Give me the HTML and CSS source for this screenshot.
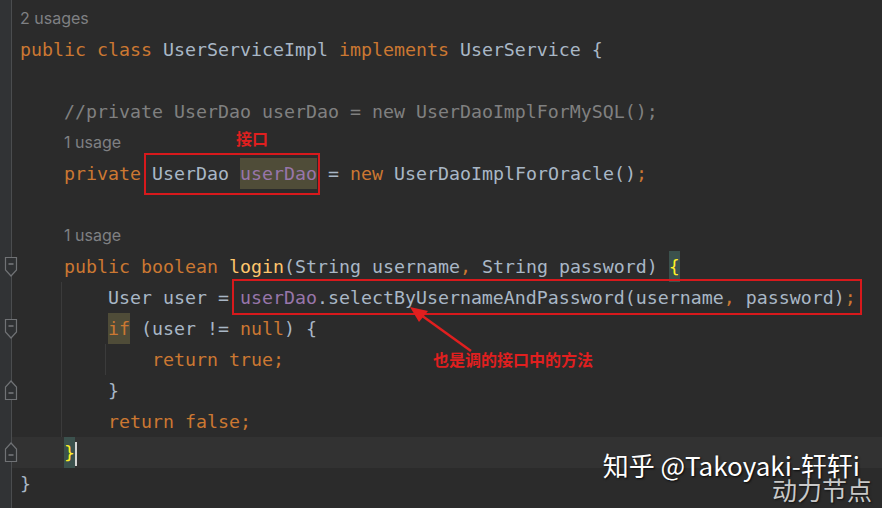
FILE: index.html
```html
<!DOCTYPE html>
<html lang="en">
<head>
    <meta charset="UTF-8">
    <title>UserServiceImpl.java</title>
    <link rel="stylesheet" href="styles.css">
</head>
<body>
    <div class="editor">
        <div class="gutter">
            <svg class="fold fold-8" width="14" height="22" viewBox="0 0 14 22"><path d="M1.5 1.5 H12.5 V14 L7 20 L1.5 14 Z" /><line x1="4.5" y1="8" x2="9.5" y2="8" /></svg>
            <svg class="fold fold-10" width="14" height="22" viewBox="0 0 14 22"><path d="M1.5 1.5 H12.5 V14 L7 20 L1.5 14 Z" /><line x1="4.5" y1="8" x2="9.5" y2="8" /></svg>
            <svg class="fold fold-12" width="14" height="22" viewBox="0 0 14 22"><path d="M1.5 20.5 H12.5 V8 L7 2 L1.5 8 Z" /><line x1="4.5" y1="14" x2="9.5" y2="14" /></svg>
            <svg class="fold fold-14" width="14" height="22" viewBox="0 0 14 22"><path d="M1.5 20.5 H12.5 V8 L7 2 L1.5 8 Z" /><line x1="4.5" y1="14" x2="9.5" y2="14" /></svg>
        </div>

        <div class="code">
            <div class="guide guide-method"></div>
            <div class="guide guide-if"></div>

            <div class="row hint">2 usages</div>
            <div class="row"><span class="kw">public class</span> UserServiceImpl <span class="kw">implements</span> UserService {</div>
            <div class="row"> </div>
            <div class="row">    <span class="comment">//private UserDao userDao = new UserDaoImplForMySQL();</span></div>
            <div class="row hint indent1">1 usage</div>
            <div class="row">    <span class="kw">private</span> UserDao <span class="field mark">userDao</span> = <span class="kw">new</span> UserDaoImplForOracle()<span class="kw">;</span></div>
            <div class="row"> </div>
            <div class="row hint indent1">1 usage</div>
            <div class="row">    <span class="kw">public boolean</span> <span class="method">login</span>(String username<span class="kw">,</span> String password) <span class="brace-match">{</span></div>
            <div class="row">        User user = <span class="field">userDao</span>.selectByUsernameAndPassword(username<span class="kw">,</span> password)<span class="kw">;</span></div>
            <div class="row">        <span class="kw mark">if</span> (user != <span class="kw">null</span>) {</div>
            <div class="row">            <span class="kw">return true;</span></div>
            <div class="row">        }</div>
            <div class="row">        <span class="kw">return false;</span></div>
            <div class="row current">    <span class="brace-match">}</span><span class="caret"></span></div>
            <div class="row">}</div>
        </div>

        <div class="box box-field"></div>
        <div class="note note-field">接口</div>
        <div class="box box-call"></div>
        <svg class="arrow" width="882" height="508" viewBox="0 0 882 508">
            <line x1="471" y1="351" x2="421" y2="315" />
            <polygon points="410,307 428,311 419,322" />
        </svg>
        <div class="note note-call">也是调的接口中的方法</div>

        <div class="watermark">
            <div class="wm-main">知乎 @Takoyaki-轩轩i</div>
            <div class="wm-sub">动力节点</div>
        </div>
    </div>
</body>
</html>
```

FILE: styles.css
```css
body {
    margin: 0;
    padding: 0;
    background-color: #2b2b2b;
    overflow: hidden;
}

.editor {
    position: relative;
    display: flex;
    width: 882px;
    height: 508px;
    background-color: #2b2b2b;
    overflow: hidden;
}

.gutter {
    position: relative;
    z-index: 2;
    width: 11px;
    flex: none;
    background-color: #313335;
    border-right: 1px solid #4b4d4f;
}

.fold {
    position: absolute;
    left: 4px;
}

.fold path {
    fill: #2f3133;
    stroke: #707275;
    stroke-width: 1.2;
}

.fold line {
    stroke: #8a8c8f;
    stroke-width: 1.2;
}

.fold-8 { top: 256px; }
.fold-10 { top: 318px; }
.fold-12 { top: 379px; }
.fold-14 { top: 441px; }

.code {
    position: relative;
    flex: 1;
    padding-top: 3px;
    font-family: "DejaVu Sans Mono", "Liberation Mono", monospace;
    font-size: 18.27px;
    color: #a9b7c6;
}

.row {
    height: 31px;
    line-height: 31px;
    padding-left: 8px;
    white-space: pre;
}

.row.current {
    background-color: #323232;
}

.hint {
    font-family: Inter, "Noto Sans", sans-serif;
    font-size: 16px;
    color: #7f8083;
}

.hint.indent1 {
    padding-left: 52px;
}

.kw { color: #cc7832; }
.comment { color: #808080; }
.field { color: #9876aa; }
.method { color: #ffc66d; }

.mark {
    display: inline-block;
    background-color: #4f4c38;
}

.brace-match {
    display: inline-block;
    color: #ffef28;
    background-color: #3b514d;
}

.caret {
    display: inline-block;
    width: 2px;
    height: 24px;
    vertical-align: middle;
    background-color: #d4d4d4;
}

.guide {
    position: absolute;
    width: 1px;
    background-color: #3b3b3b;
}

.guide-method {
    left: 49px;
    top: 282px;
    height: 155px;
}

.guide-if {
    left: 93px;
    top: 344px;
    height: 31px;
}

.box {
    position: absolute;
    border: 2px solid #d7191c;
    box-sizing: border-box;
}

.box-field {
    left: 144px;
    top: 153px;
    width: 176px;
    height: 42px;
}

.box-call {
    left: 232px;
    top: 279px;
    width: 630px;
    height: 36px;
}

.arrow {
    position: absolute;
    left: 0;
    top: 0;
}

.arrow line {
    stroke: #e01f1f;
    stroke-width: 2.5;
}

.arrow polygon {
    fill: #e01f1f;
}

.note {
    position: absolute;
    font-family: "Noto Sans CJK SC", sans-serif;
    font-size: 16px;
    font-weight: bold;
    line-height: 20px;
    color: #e01f1f;
}

.note-field {
    left: 236px;
    top: 128px;
}

.note-call {
    left: 433px;
    top: 349px;
}

.watermark {
    position: absolute;
    right: 10px;
    bottom: 8px;
    display: flex;
    flex-direction: column;
    align-items: flex-end;
    font-family: "Noto Sans CJK SC", sans-serif;
    font-size: 25px;
}

.wm-main {
    font-size: 26px;
    line-height: 30px;
    color: #ffffff;
    text-shadow: 1px 1px 2px rgba(0, 0, 0, 0.8);
    margin-right: 12px;
}

.wm-sub {
    line-height: 22px;
    margin-top: -2px;
    color: #c9c9c9;
    text-shadow: 1px 1px 2px rgba(0, 0, 0, 0.6);
}
```
